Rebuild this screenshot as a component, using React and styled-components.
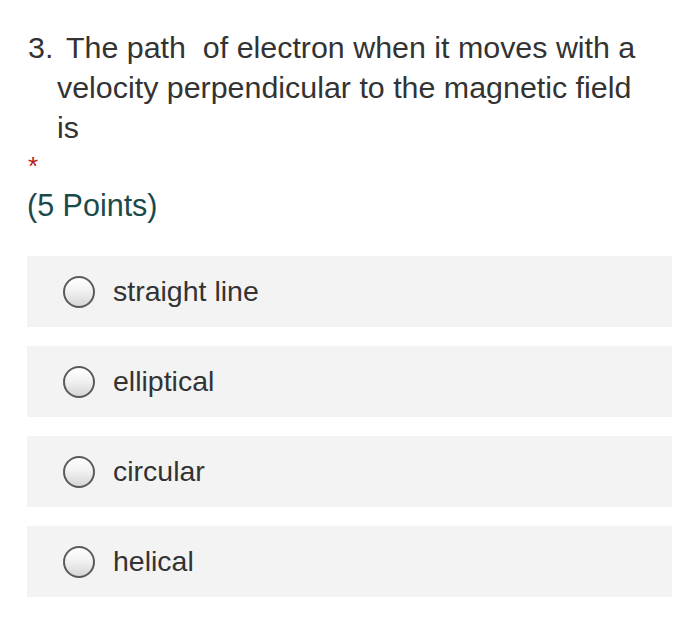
import React from "react";
import styled, { createGlobalStyle } from "styled-components";

const GlobalStyle = createGlobalStyle`
  html, body {
    margin: 0;
    padding: 0;
    background: #ffffff;
  }
  body {
    font-family: "Liberation Sans", Arial, sans-serif;
  }
`;

const Page = styled.div`
  width: 700px;
  height: 642px;
  box-sizing: border-box;
  padding: 27px 28px 0 27px;
  overflow: hidden;
`;

const Title = styled.div`
  font-size: 30.4px;
  line-height: 40px;
  color: #333333;
  padding-left: 30px;
  padding-right: 25px;
  text-indent: -29px;
  white-space: pre-wrap;
`;

const Num = styled.span`
  display: inline-block;
  width: 38px;
  text-indent: 0;
`;

const Required = styled.div`
  color: #b81c1c;
  font-size: 26px;
  line-height: 30px;
  height: 26px;
  margin-left: 1px;
  margin-top: 4px;
`;

const Points = styled.div`
  font-size: 30.5px;
  line-height: 40px;
  color: #1b4a4b;
  margin-top: 8px;
`;

const Options = styled.div`
  display: flex;
  flex-direction: column;
  gap: 19px;
  margin-top: 31px;
`;

const Option = styled.label`
  display: flex;
  align-items: center;
  gap: 18px;
  height: 71px;
  padding-left: 36px;
  background: #f3f3f3;
  font-size: 28.5px;
  color: #333333;
  cursor: pointer;
`;

const Radio = styled.span`
  width: 28px;
  height: 28px;
  border-radius: 50%;
  border: 2px solid #5a5a5a;
  background: linear-gradient(180deg, #ffffff 0%, #f2f2f2 45%, #d6d6d6 100%);
  flex: none;
`;

const options = ["straight line", "elliptical", "circular", "helical"];

export default function App() {
  return (
    <Page>
      <GlobalStyle />
      <Title>
        <Num>3.</Num>
        {"The path  of electron when it moves with a velocity perpendicular to the magnetic field is"}
      </Title>
      <Required>*</Required>
      <Points>(5 Points)</Points>
      <Options>
        {options.map((o) => (
          <Option key={o}>
            <Radio />
            {o}
          </Option>
        ))}
      </Options>
    </Page>
  );
}
